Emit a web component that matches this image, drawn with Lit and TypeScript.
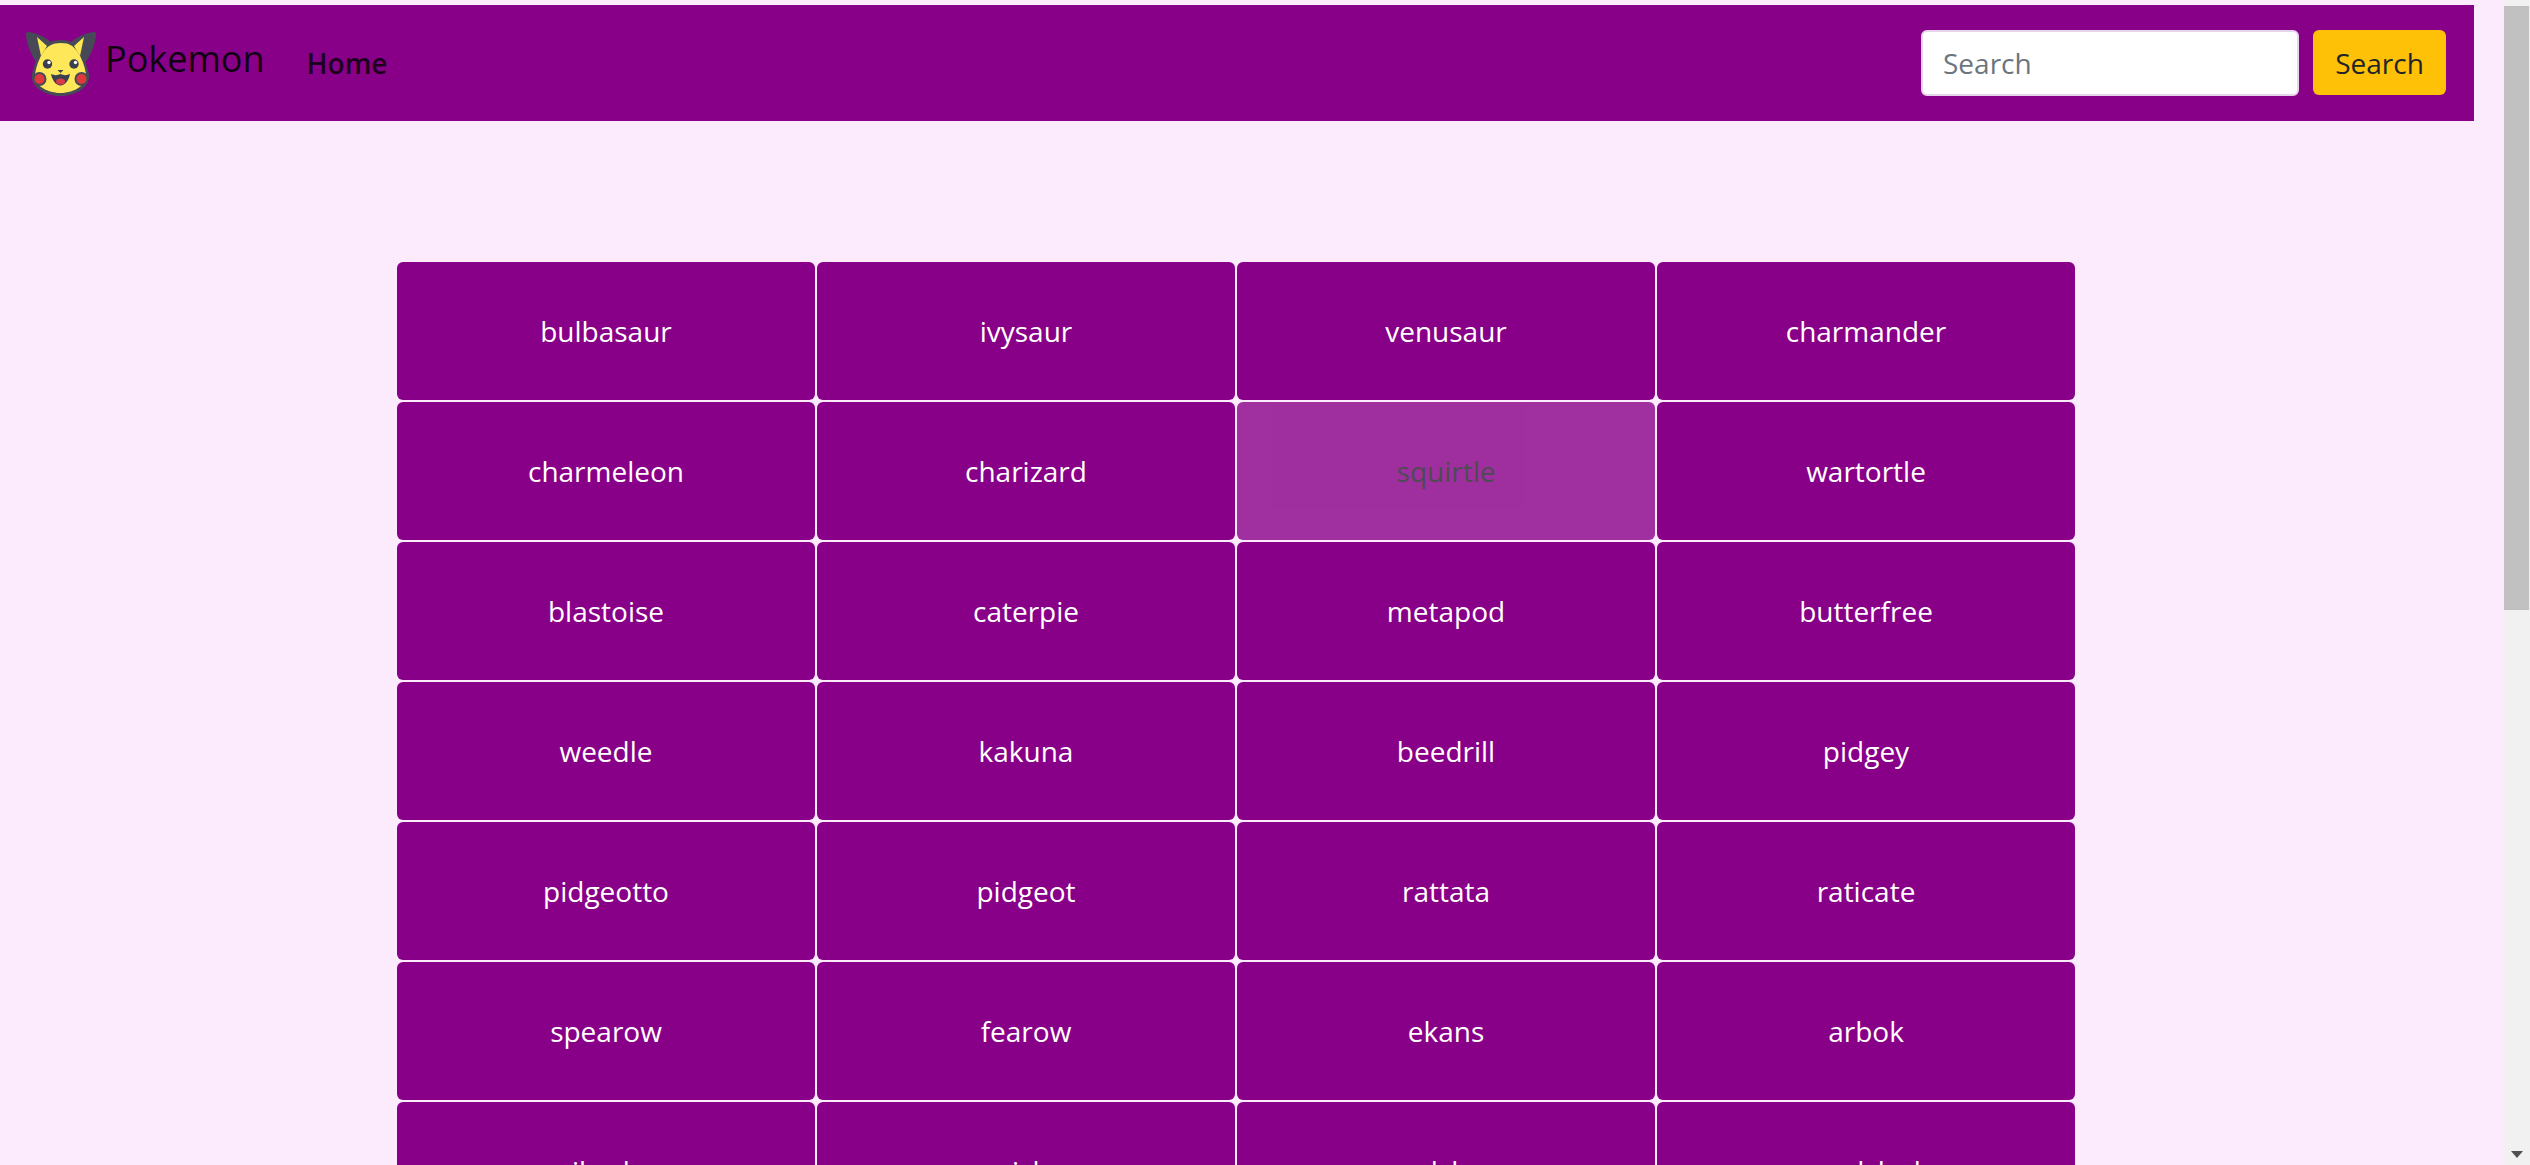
import { LitElement, html, css, svg } from "lit";
import { customElement } from "lit/decorators.js";

const NAMES = [
  "bulbasaur","ivysaur","venusaur","charmander",
  "charmeleon","charizard","squirtle","wartortle",
  "blastoise","caterpie","metapod","butterfree",
  "weedle","kakuna","beedrill","pidgey",
  "pidgeotto","pidgeot","rattata","raticate",
  "spearow","fearow","ekans","arbok",
  "pikachu","raichu","sandshrew","sandslash",
];

const logo = svg`<svg class="logo" viewBox="0 0 70 66" width="70" height="66" aria-hidden="true">
  <path d="M27 14 C20 7 11 3 2 2 C0 2 0 3 0 5 C1 15 5 25 11 33 Z" fill="#474a56"/>
  <path d="M43 14 C50 7 59 3 68 2 C70 2 70 3 70 5 C69 15 65 25 59 33 Z" fill="#474a56"/>
  <path d="M35 10 C26 10 20 13 16 19 C11 26 8 36 6 44 C4 56 18 66 34.500 66 C51 66 65 56 63 44 C61 36 58 26 53 19 C49 13 44 10 35 10 Z" fill="#474a56"/>
  <path d="M15 26 L11 7 L21 16 Z" fill="#ffe94f"/>
  <path d="M54 26 L58 7 L48 16 Z" fill="#ffe94f"/>
  <path d="M35 13 C26 13 22 16 18 21 C13 28 10 37 9 44 C7 54 20 63 34.500 63 C49 63 62 54 60 44 C59 37 56 28 51 21 C47 16 44 13 35 13 Z" fill="#ffe75a"/>
  <circle cx="21.500" cy="34" r="4.700" fill="#3c3f4d"/><circle cx="23" cy="32.500" r="1.700" fill="#fff"/>
  <circle cx="48" cy="34" r="4.700" fill="#3c3f4d"/><circle cx="49.500" cy="32.500" r="1.700" fill="#fff"/>
  <circle cx="13.500" cy="49" r="6" fill="#e0393b" stroke="#474a56" stroke-width="2"/>
  <circle cx="55.500" cy="49" r="6" fill="#e0393b" stroke="#474a56" stroke-width="2"/>
  <path d="M31.500 40 L37.500 40 L34.500 43 Z" fill="#3c3f4d"/>
  <path d="M25 44 C28 45.500 31.500 45.500 34.500 44 C37.500 45.500 41 45.500 44 44 C43 50 39 55.500 34.500 55.500 C30 55.500 26 50 25 44 Z" fill="#3c3f4d"/>
  <path d="M30 51 C30 47.500 39 47.500 39 51 C39 54 37 54.500 34.500 54.500 C32 54.500 30 54 30 51 Z" fill="#dd3a49"/>
</svg>`;

@customElement("app-root")
export class AppRoot extends LitElement {
  static styles = css`
    :host {
      display: flex;
      height: 100vh;
      overflow: hidden;
      background: #fcebfd;
      font-family: "Open Sans", "Noto Sans", sans-serif;
      font-size: 28px;
    }
    .page {
      flex: 1;
      min-width: 0;
      height: 100%;
      overflow: hidden;
      padding-top: 5px;
      box-sizing: border-box;
    }
    .nav {
      width: 2474px;
      height: 116px;
      box-sizing: border-box;
      background: #880088;
      display: flex;
      align-items: center;
      padding: 0 28px 0 26px;
    }
    .brand {
      display: flex;
      align-items: center;
      gap: 9px;
      font-size: 36px;
      color: rgba(0, 0, 0, 0.9);
    }
    .logo { display: block; }
    .brand span { position: relative; top: -5px; }
    .home {
      margin-left: 42px;
      color: rgba(0, 0, 0, 0.8);
      font-weight: 600;
    }
    .form {
      margin-left: auto;
      display: flex;
      gap: 14px;
      align-items: flex-start;
    }
    .input {
      width: 378px;
      height: 66px;
      box-sizing: border-box;
      border: 2px solid #e6d5ea;
      border-radius: 6px;
      background: #fff;
      padding: 0 20px;
      font: inherit;
      outline: none;
    }
    .input::placeholder { color: #6c757d; opacity: 1; }
    .btn {
      width: 133px;
      height: 65px;
      border: 0;
      border-radius: 6px;
      background: #ffc107;
      color: #212529;
      font: inherit;
      padding: 0;
    }
    .grid {
      width: 1680px;
      margin: 141px 0 0 397px;
      display: grid;
      grid-template-columns: repeat(4, 418px);
      grid-auto-rows: 138px;
      gap: 2px;
    }
    .card {
      background: #880088;
      border-radius: 6px;
      color: #fff;
      display: flex;
      align-items: center;
      justify-content: center;
    }
    .card.hover {
      opacity: 0.8;
      color: #212529;
    }
    .scrollbar {
      flex: 0 0 26px;
      height: 100%;
      background: #f1f1f1;
      position: relative;
    }
    .thumb {
      position: absolute;
      left: 0;
      right: 1px;
      top: 6px;
      height: 604px;
      background: #c1c1c1;
    }
    .arrow {
      position: absolute;
      left: 7px;
      bottom: 7px;
      width: 0;
      height: 0;
      border-left: 6px solid transparent;
      border-right: 6px solid transparent;
      border-top: 7px solid #505050;
    }
  `;

  render() {
    return html`
      <div class="page">
        <nav class="nav">
          <div class="brand">${logo}<span>Pokemon</span></div>
          <div class="home">Home</div>
          <form class="form">
            <input class="input" placeholder="Search" />
            <button class="btn" type="button">Search</button>
          </form>
        </nav>
        <div class="grid">
          ${NAMES.map(
            (n) => html`<div class="card ${n === "squirtle" ? "hover" : ""}">${n}</div>`
          )}
        </div>
      </div>
      <div class="scrollbar"><div class="thumb"></div><div class="arrow"></div></div>
    `;
  }
}
